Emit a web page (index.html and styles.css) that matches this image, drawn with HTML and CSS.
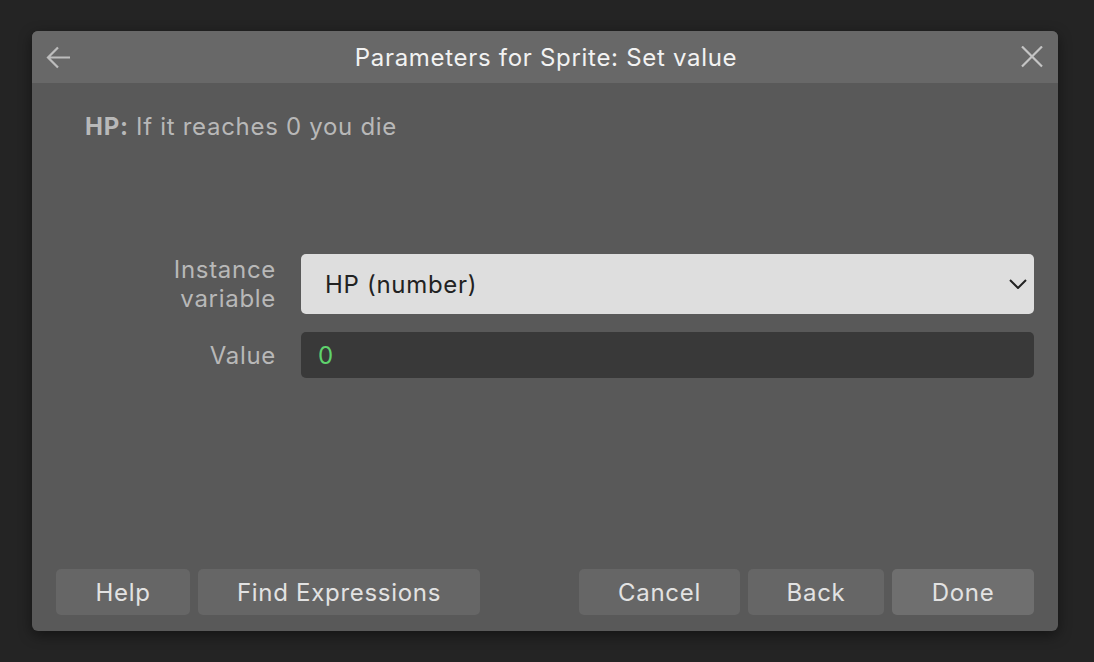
FILE: index.html
```html
<!DOCTYPE html>
<html>
<head>
<meta charset="utf-8">
<link rel="stylesheet" href="styles.css">
</head>
<body>
<div class="dialog">
  <div class="header">
    <svg class="back" width="26" height="26" viewBox="0 0 26 26"><path d="M24 12.5H2.5M12 2.5L2 12.5L12 22.5" fill="none" stroke="#bdbdbd" stroke-width="2.2"/></svg>
    <div class="title">Parameters for Sprite: Set value</div>
    <svg class="close" width="24" height="22" viewBox="0 0 24 22"><path d="M2 0.5L22 20.5M22 0.5L2 20.5" fill="none" stroke="#c4c4c4" stroke-width="2.2"/></svg>
  </div>
  <div class="body">
    <div class="desc"><b>HP:</b> If it reaches 0 you die</div>
    <div class="form">
      <div class="label">Instance<br>variable</div>
      <div class="select"><span>HP (number)</span>
        <svg width="18" height="10" viewBox="0 0 18 10"><path d="M1 1L9 9L17 1" fill="none" stroke="#222" stroke-width="2"/></svg>
      </div>
      <div class="label">Value</div>
      <div class="input">0</div>
    </div>
    <div class="buttons">
      <div class="btn help">Help</div>
      <div class="btn find">Find Expressions</div>
      <div class="spacer"></div>
      <div class="btn cancel">Cancel</div>
      <div class="btn backbtn">Back</div>
      <div class="btn done">Done</div>
    </div>
  </div>
</div>
</body>
</html>
```
FILE: styles.css
```css
html, body {
  margin: 0;
  padding: 0;
  background: #242424;
  font-family: Inter, "Open Sans", "Liberation Sans", sans-serif;
}
body {
  width: 1094px;
  height: 662px;
  padding-top: 31px;
  padding-left: 32px;
  box-sizing: border-box;
}
.dialog {
  width: 1026px;
  height: 600px;
  background: #595959;
  border-radius: 6px;
  overflow: hidden;
  display: flex;
  flex-direction: column;
  box-shadow: 0 4px 14px rgba(0,0,0,0.45);
  font-size: 24px;
  letter-spacing: 0.7px;
}
.header {
  height: 52px;
  background: #686868;
  display: flex;
  align-items: center;
  flex-shrink: 0;
}
.back {
  margin-left: 14px;
  margin-top: 1px;
}
.title {
  flex: 1;
  text-align: center;
  color: #f2f2f2;
  margin-top: 1px;
}
.close {
  margin-right: 14px;
}
.body {
  flex: 1;
  display: flex;
  flex-direction: column;
  padding: 0 24px 16px 24px;
}
.desc {
  color: #b8b8b8;
  margin-top: 29px;
  margin-left: 29px;
  line-height: 29px;
}
.desc b {
  font-weight: 700;
}
.form {
  display: grid;
  grid-template-columns: 220px 1fr;
  column-gap: 25px;
  row-gap: 18px;
  margin-top: 113px;
  flex: 1;
  align-content: start;
}
.label {
  color: #b8b8b8;
  text-align: right;
  line-height: 29px;
  align-self: center;
}
.select {
  height: 60px;
  background: #dedede;
  border-radius: 5px;
  display: flex;
  align-items: center;
  justify-content: space-between;
  padding: 0 7px 0 24px;
  color: #222;
}
.input {
  height: 46px;
  background: #393939;
  border-radius: 5px;
  display: flex;
  align-items: center;
  padding-left: 17px;
  color: #5fd36d;
}
.buttons {
  display: flex;
  gap: 8px;
  height: 46px;
}
.spacer {
  flex: 1;
}
.btn {
  background: #666666;
  border-radius: 5px;
  color: #e2e2e2;
  display: flex;
  align-items: center;
  justify-content: center;
}
.help { width: 134px; }
.find { width: 282px; }
.cancel { width: 161px; }
.backbtn { width: 136px; }
.done { width: 142px; background: #6f6f6f; }
```
